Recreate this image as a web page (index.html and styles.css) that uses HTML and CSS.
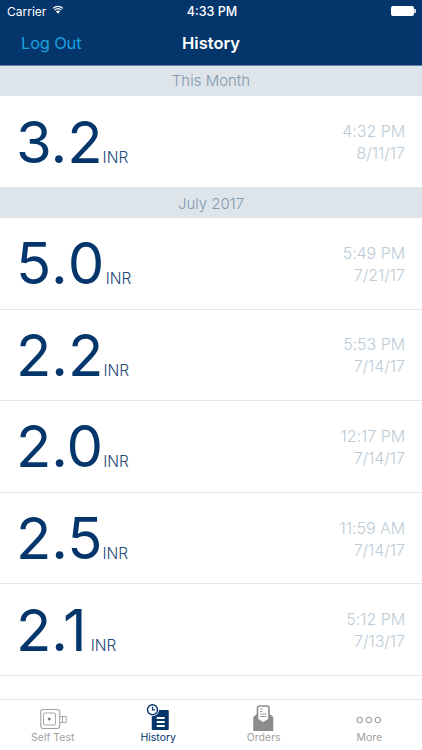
FILE: index.html
```html
<!DOCTYPE html>
<html lang="en">
<head>
<meta charset="utf-8">
<title>History</title>
<link rel="stylesheet" href="styles.css">
</head>
<body>
<div class="app">
  <header class="top">
    <div class="status">
      <div class="status-left">
        <span>Carrier</span>
        <svg class="wifi" viewBox="0 0 14 10" width="12" height="9"><path d="M7 10 4.6 7.300a3.400 3.400 0 0 1 4.800 0z" fill="#fff"/><path d="M3.100 5.700a5.600 5.600 0 0 1 7.800 0M1.300 3.700a8.200 8.200 0 0 1 11.400 0" fill="none" stroke="#fff" stroke-width="1.500"/></svg>
      </div>
      <div class="status-time">4:33 PM</div>
      <div class="battery"><span class="battery-body"></span><span class="battery-tip"></span></div>
    </div>
    <nav class="nav">
      <a class="logout">Log Out</a>
      <h1 class="title">History</h1>
    </nav>
  </header>
  <main class="list">
    <div class="section">This Month</div>
    <div class="row">
      <div class="value"><span class="num">3.2</span><span class="unit">INR</span></div>
      <div class="when"><span>4:32 PM</span><span>8/11/17</span></div>
    </div>
    <div class="section section-tall">July 2017</div>
    <div class="row line">
      <div class="value"><span class="num num-wide">5.0</span><span class="unit">INR</span></div>
      <div class="when"><span>5:49 PM</span><span>7/21/17</span></div>
    </div>
    <div class="row line">
      <div class="value"><span class="num">2.2</span><span class="unit">INR</span></div>
      <div class="when"><span>5:53 PM</span><span>7/14/17</span></div>
    </div>
    <div class="row line">
      <div class="value"><span class="num">2.0</span><span class="unit">INR</span></div>
      <div class="when"><span>12:17 PM</span><span>7/14/17</span></div>
    </div>
    <div class="row line">
      <div class="value"><span class="num">2.5</span><span class="unit">INR</span></div>
      <div class="when"><span>11:59 AM</span><span>7/14/17</span></div>
    </div>
    <div class="row line">
      <div class="value"><span class="num num-gap">2.1</span><span class="unit">INR</span></div>
      <div class="when"><span>5:12 PM</span><span>7/13/17</span></div>
    </div>
  </main>
  <footer class="tabs">
    <div class="tab">
      <svg class="icon" viewBox="0 0 30 28" width="30" height="28"><rect x="2.750" y="6.500" width="19" height="19" rx="2.500" fill="none" stroke="#a3a3a3" stroke-width="1.100"/><rect x="5.500" y="10" width="12" height="12" rx="1" fill="none" stroke="#a8a8a8" stroke-width="1"/><circle cx="11.250" cy="16" r="1.500" fill="#7d7d7d"/><path d="M21.750 13.500h6.500v6h-6.500M24.500 13.500v6" fill="none" stroke="#a8a8a8" stroke-width="1"/></svg>
      <span>Self Test</span>
    </div>
    <div class="tab active">
      <svg class="icon" viewBox="0 0 30 28" width="30" height="28"><rect x="8.750" y="7" width="17" height="20" rx="1" fill="#04366c"/><path d="M13.750 15h8M13.750 19h8M13.750 23h8" stroke="#fff" stroke-width="2"/><circle cx="9.500" cy="6.700" r="5.600" fill="#fff" stroke="#fff" stroke-width="2"/><circle cx="9.500" cy="6.700" r="5" fill="#fff" stroke="#04366c" stroke-width="1.400"/><path d="M9.500 3.800v3.100h2.600" fill="none" stroke="#04366c" stroke-width="1.200"/></svg>
      <span>History</span>
    </div>
    <div class="tab">
      <svg class="icon" viewBox="0 0 30 28" width="30" height="28"><path d="M4.250 14 8.500 10.500h11.500l4.250 3.500v14h-20z" fill="#8c8c8c"/><path d="M8.500 5a2 2 0 0 1 2-2h7.500a2 2 0 0 1 2 2v11.500l-5.750 3.500-5.750-3.500z" fill="#fff" stroke="#8c8c8c" stroke-width="1.600" stroke-linejoin="round"/><path d="M11 6h2.500M11 8.500h2.500M11 11h6.500M11 13.500h6.500" stroke="#9f9f9f" stroke-width="1"/></svg>
      <span>Orders</span>
    </div>
    <div class="tab">
      <svg class="icon" viewBox="0 0 30 28" width="30" height="28"><g fill="none" stroke="#8f8f8f" stroke-width="1"><circle cx="5.750" cy="17" r="2.800"/><circle cx="14.750" cy="17" r="2.800"/><circle cx="23.750" cy="17" r="2.800"/></g></svg>
      <span>More</span>
    </div>
  </footer>
</div>
</body>
</html>
```
FILE: styles.css
```css
* { box-sizing: border-box; }
html, body { margin: 0; padding: 0; }
body { font-family: Inter, "Liberation Sans", sans-serif; background: #fff; }
.app { width: 422px; height: 750px; display: flex; flex-direction: column; overflow: hidden; }
.top { background: #04366c; height: 66px; border-bottom: 1px solid #5e7fa6; color: #fff; flex: none; }
.status { height: 22px; padding: 0 6px 0 7px; display: grid; grid-template-columns: 1fr auto 1fr; align-items: center; font-size: 12px; }
.status-left { display: flex; align-items: center; gap: 6px; }
.wifi { display: block; margin-top: -3px; }
.status-time { font-weight: 500; font-size: 12.500px; margin-left: 1px; }
.battery { justify-self: end; display: flex; align-items: center; }
.battery-body { width: 23px; height: 10px; background: #fff; border-radius: 2px; }
.battery-tip { width: 2px; height: 4px; background: #c6d2e0; }
.nav { height: 41px; display: grid; grid-template-columns: 1fr auto 1fr; align-items: center; padding: 0 21px; }
.logout { font-size: 16.500px; color: #1ba1dc; font-weight: 400; letter-spacing: -0.2px; }
.title { margin: 0; font-size: 16.500px; font-weight: 600; }
.list { flex: 1; min-height: 0; }
.section { height: 30px; padding-bottom: 1px; background: #dde5eb; color: #8398ae; font-size: 15px; font-weight: 300; display: flex; align-items: center; justify-content: center; }
.section-tall { height: 31px; padding: 1px 0 0; }
.row { height: 91px; padding: 0 17px 0 16px; display: flex; justify-content: space-between; align-items: center; }
.row.line { height: 91.600px; border-bottom: 1px solid #e6e6e6; }
.value { display: flex; align-items: baseline; color: #04366c; }
.num { font-size: 58px; font-weight: 400; line-height: 1; }
.num-wide { letter-spacing: 1.400px; }
.num-gap + .unit { margin-left: 4px; }
.unit { font-size: 15.500px; font-weight: 300; color: #234a78; }
.when { display: flex; flex-direction: column; align-items: flex-end; padding-top: 1px; color: #bccbd6; font-size: 16px; letter-spacing: -0.05px; line-height: 22px; font-weight: 300; }
.tabs { height: 51px; flex: none; border-top: 1px solid #e2e2e2; display: grid; grid-template-columns: repeat(4, 1fr); }
.tab { display: flex; flex-direction: column; align-items: center; justify-content: flex-end; color: #9f9f9f; font-size: 10.500px; line-height: 12px; padding-bottom: 6px; }
.tab.active { color: #04366c; }
.icon { display: block; margin-bottom: 1px; }
```
